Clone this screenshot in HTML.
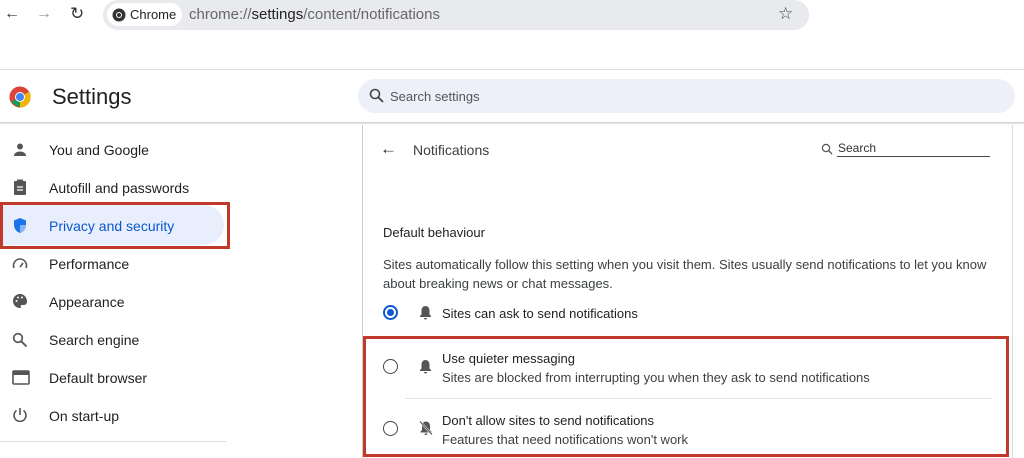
<!DOCTYPE html>
<html><head><style>
*{margin:0;padding:0;box-sizing:border-box}
body{width:1024px;height:458px;overflow:hidden;background:#fff;font-family:"Liberation Sans",sans-serif;color:#202124;position:relative}
.abs{position:absolute}
.nav{font-size:14px;color:#202124}
.item{position:absolute;left:49px;font-size:14px;color:#1f1f1f}
.ic{position:absolute;left:12px}
.t{font-size:13px;color:#3c4043;position:absolute}
</style></head><body>
<!-- browser top -->
<div class="abs" style="left:4px;top:5px;font-size:16px;color:#333">&#8592;</div>
<div class="abs" style="left:36px;top:5px;font-size:16px;color:#999">&#8594;</div>
<div class="abs" style="left:70px;top:4px;font-size:17px;color:#333">&#8635;</div>
<div class="abs" style="left:103px;top:0;width:706px;height:30px;background:#e9eaee;border-radius:15px"></div>
<div class="abs" style="left:107px;top:3px;width:75px;height:23px;background:#fff;border-radius:12px"></div>
<svg class="abs" style="left:112px;top:8px" width="14" height="14" viewBox="0 0 14 14"><circle cx="7" cy="7" r="6.5" fill="#333"/><circle cx="7" cy="7" r="3" fill="#fff"/><circle cx="7" cy="7" r="2" fill="#333"/></svg>
<div class="abs" style="left:130px;top:7px;font-size:13px;color:#222">Chrome</div>
<div class="abs" style="left:189px;top:6px;font-size:15px;color:#666">chrome://<b style="color:#222;font-weight:normal">settings</b>/content/notifications</div>
<div class="abs" style="left:778px;top:4px;font-size:17px;color:#444">&#9734;</div>
<div class="abs" style="left:0;top:69px;width:1024px;height:1px;background:#ddd"></div>
<!-- header -->
<svg class="abs" style="left:9px;top:86px" width="22" height="22" viewBox="0 0 22 22"><circle cx="11" cy="11" r="10.5" fill="#db4437"/><path d="M11 11 L1.9 16.2 A10.5 10.5 0 0 1 11 0.5 Z" fill="#db4437"/><path d="M11 11 L20.1 5.8 A10.5 10.5 0 0 1 11 21.5 L1.9 16.2Z" fill="#0f9d58"/><path d="M11 11 L20.1 5.8 A10.5 10.5 0 0 1 11 21.5Z" fill="#f4b400"/><circle cx="11" cy="11" r="5" fill="#fff"/><circle cx="11" cy="11" r="4" fill="#4285f4"/></svg>
<div class="abs" style="left:52px;top:84px;font-size:22px;color:#202124">Settings</div>
<div class="abs" style="left:358px;top:79px;width:657px;height:34px;background:#edf0f8;border-radius:17px"></div>
<svg class="abs" style="left:369px;top:88px" width="15" height="15" viewBox="0 0 15 15"><circle cx="6" cy="6" r="4.5" fill="none" stroke="#444" stroke-width="1.6"/><path d="M9.5 9.5L14 14" stroke="#444" stroke-width="1.8"/></svg>
<div class="abs" style="left:390px;top:89px;font-size:13px;color:#555">Search settings</div>
<div class="abs" style="left:0;top:122px;width:1024px;height:3px;background:linear-gradient(#ccc,#fff)"></div>
<!-- sidebar -->
<div class="abs" style="left:0;top:205px;width:224px;height:40px;background:#e8eefb;border-radius:0 20px 20px 0"></div>
<div class="abs" style="left:0;top:202px;width:230px;height:47px;border:3px solid #c0392b"></div>
<svg class="ic" style="top:142px" width="16" height="16" viewBox="0 0 16 16"><circle cx="8" cy="4.5" r="3" fill="#555"/><path d="M2 14c0-3 3-4.5 6-4.5s6 1.5 6 4.5z" fill="#555"/></svg>
<div class="item" style="top:142px">You and Google</div>
<svg class="ic" style="top:179px" width="16" height="17" viewBox="0 0 16 17"><rect x="2" y="2" width="12" height="14" rx="1" fill="#555"/><rect x="5" y="0.5" width="6" height="3" fill="#555"/><path d="M5 8h6M5 11h6" stroke="#fff" stroke-width="1.3"/></svg>
<div class="item" style="top:180px">Autofill and passwords</div>
<svg class="ic" style="top:217px" width="16" height="17" viewBox="0 0 16 17"><path d="M8 1L2 3.5v4.5c0 4 3 7 6 8 3-1 6-4 6-8V3.5z" fill="#1a73e8"/><path d="M8 1v15c3-1 6-4 6-8V8H8z" fill="#8ab4f8"/></svg>
<div class="item" style="top:218px;color:#0b57d0">Privacy and security</div>
<svg class="ic" style="top:256px" width="16" height="16" viewBox="0 0 16 16"><path d="M2 12a6.5 6.5 0 1 1 12 0" fill="none" stroke="#555" stroke-width="1.6"/><path d="M8 11l3-4" stroke="#555" stroke-width="1.6"/></svg>
<div class="item" style="top:256px">Performance</div>
<svg class="ic" style="top:293px" width="16" height="16" viewBox="0 0 16 16"><path d="M8 1a7 7 0 0 0 0 14c1 0 1.3-.8.8-1.5-.5-.8 0-1.5 1-1.5H12a3 3 0 0 0 3-3C15 4 12 1 8 1z" fill="#555"/><circle cx="4.5" cy="8" r="1" fill="#fff"/><circle cx="6" cy="4.5" r="1" fill="#fff"/><circle cx="10" cy="4.5" r="1" fill="#fff"/></svg>
<div class="item" style="top:294px">Appearance</div>
<svg class="ic" style="top:332px" width="16" height="16" viewBox="0 0 16 16"><circle cx="6" cy="6" r="4.3" fill="none" stroke="#555" stroke-width="1.7"/><path d="M9.3 9.3L14.5 14.5" stroke="#555" stroke-width="1.9"/></svg>
<div class="item" style="top:332px">Search engine</div>
<svg class="ic" style="top:370px" width="18" height="15" viewBox="0 0 18 15"><rect x="1" y="1" width="16" height="13" rx="1" fill="none" stroke="#555" stroke-width="1.6"/><rect x="1" y="1" width="16" height="4" fill="#555"/></svg>
<div class="item" style="top:370px">Default browser</div>
<svg class="ic" style="top:407px" width="16" height="16" viewBox="0 0 16 16"><path d="M4.5 3.5a6 6 0 1 0 7 0" fill="none" stroke="#555" stroke-width="1.6"/><path d="M8 1v7" stroke="#555" stroke-width="1.6"/></svg>
<div class="item" style="top:408px">On start-up</div>
<div class="abs" style="left:0;top:441px;width:226px;height:1px;background:#ddd"></div>
<!-- card -->
<div class="abs" style="left:362px;top:125px;width:1px;height:333px;background:#ccc"></div>
<div class="abs" style="left:1012px;top:125px;width:1px;height:333px;background:#ddd"></div>
<div class="abs" style="left:380px;top:139px;font-size:17px;color:#333">&#8592;</div>
<div class="abs" style="left:413px;top:142px;font-size:14px;color:#3c4043">Notifications</div>
<svg class="abs" style="left:821px;top:143px" width="12" height="12" viewBox="0 0 12 12"><circle cx="5" cy="5" r="3.6" fill="none" stroke="#555" stroke-width="1.2"/><path d="M7.6 7.6L11 11" stroke="#555" stroke-width="1.3"/></svg>
<div class="abs" style="left:838px;top:141px;font-size:12px;color:#333">Search</div>
<div class="abs" style="left:837px;top:156px;width:153px;height:1px;background:#444"></div>
<div class="abs" style="left:383px;top:225px;font-size:13px;color:#202124">Default behaviour</div>
<div class="t" style="left:383px;top:255px;line-height:19px;width:610px">Sites automatically follow this setting when you visit them. Sites usually send notifications to let you know about breaking news or chat messages.</div>
<div class="abs" style="left:383px;top:305px;width:15px;height:15px;border:2px solid #0b57d0;border-radius:50%"></div>
<div class="abs" style="left:387px;top:309px;width:7px;height:7px;background:#0b57d0;border-radius:50%"></div>
<svg class="abs" style="left:419px;top:305px" width="13" height="15" viewBox="0 0 13 15"><path d="M6.5 1c-2.5 0-4 2-4 4.5v4L1 11v1h11v-1l-1.5-1.5v-4C10.5 3 9 1 6.5 1z" fill="#555"/><path d="M5 13h3a1.5 1.5 0 0 1-3 0z" fill="#555"/></svg>
<div class="t" style="left:442px;top:306px;color:#202124">Sites can ask to send notifications</div>
<div class="abs" style="left:363px;top:336px;width:646px;height:121px;border:3px solid #c0392b"></div>
<div class="abs" style="left:383px;top:359px;width:15px;height:15px;border:1.5px solid #444;border-radius:50%"></div>
<svg class="abs" style="left:419px;top:359px" width="13" height="15" viewBox="0 0 13 15"><path d="M6.5 1c-2.5 0-4 2-4 4.5v4L1 11v1h11v-1l-1.5-1.5v-4C10.5 3 9 1 6.5 1z" fill="#555"/><path d="M5 13h3a1.5 1.5 0 0 1-3 0z" fill="#555"/></svg>
<div class="t" style="left:442px;top:351px;color:#202124">Use quieter messaging</div>
<div class="t" style="left:442px;top:370px">Sites are blocked from interrupting you when they ask to send notifications</div>
<div class="abs" style="left:405px;top:398px;width:587px;height:1px;background:#e6e6e6"></div>
<div class="abs" style="left:383px;top:421px;width:15px;height:15px;border:1.5px solid #444;border-radius:50%"></div>
<svg class="abs" style="left:419px;top:420px" width="14" height="16" viewBox="0 0 14 16"><path d="M7 1.5c-2.5 0-4 2-4 4.5v4L1.5 11.5v1h11v-1L11 10V6c0-2.5-1.5-4.5-4-4.5z" fill="#555"/><path d="M5.5 13.5h3a1.5 1.5 0 0 1-3 0z" fill="#555"/><path d="M1 1.5L13 14.5" stroke="#fff" stroke-width="2.2"/><path d="M1 1.5L13 14.5" stroke="#555" stroke-width="1.2"/></svg>
<div class="t" style="left:442px;top:413px;color:#202124">Don't allow sites to send notifications</div>
<div class="t" style="left:442px;top:432px">Features that need notifications won't work</div>
</body></html>
